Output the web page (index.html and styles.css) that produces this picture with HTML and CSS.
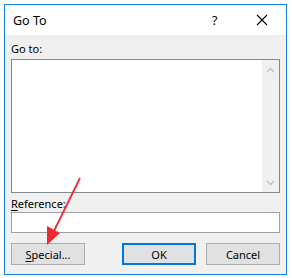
FILE: index.html
```html
<!DOCTYPE html>
<html lang="en">
<head>
    <meta charset="UTF-8">
    <title>Go To</title>
    <link rel="stylesheet" href="styles.css">
</head>
<body>

    <div class="window">
        <div class="titlebar">
            <span class="title">Go To</span>
            <span class="help">?</span>
            <svg class="close" width="12" height="12" viewBox="0 0 12 12">
                <path d="M1 1 L11 11 M11 1 L1 11" stroke="#000" stroke-width="1.1" fill="none"/>
            </svg>
        </div>
        <div class="content">
            <div class="label">Go to:</div>
            <div class="listbox">
                <div class="list-area"></div>
                <div class="scrollbar">
                    <svg width="9" height="6" viewBox="0 0 9 6"><path d="M1 5 L4.5 1.5 L8 5" stroke="#c2c2c2" stroke-width="1.4" fill="none"/></svg>
                    <svg width="9" height="6" viewBox="0 0 9 6"><path d="M1 1 L4.5 4.5 L8 1" stroke="#c2c2c2" stroke-width="1.4" fill="none"/></svg>
                </div>
            </div>
            <div class="label ref-label"><u>R</u>eference:</div>
            <div class="input"></div>
            <div class="buttons">
                <button class="btn"><u>S</u>pecial...</button>
                <button class="btn btn-default">OK</button>
                <button class="btn">Cancel</button>
            </div>
        </div>

        <!-- red pointer arrow drawn over the dialog -->
        <svg class="arrow" width="60" height="80" viewBox="0 0 60 80">
            <path d="M52 3 L25 58" stroke="#ee2a35" stroke-width="1.8" fill="none"/>
            <path d="M19 70 L19 51 L32 58 Z" fill="#ee2a35"/>
        </svg>
    </div>

</body>
</html>
```

FILE: styles.css
```css
body {
    margin: 0;
    background: #fff;
    font-family: "Noto Sans", "Open Sans", sans-serif;
    color: #000;
}
.window {
    position: relative;
    margin: 4px;
    width: 283px;
    height: 271px;
    box-sizing: border-box;
    border: 1px solid #1883d7;
    background: #f0f0f0;
    display: flex;
    flex-direction: column;
}
.titlebar {
    height: 30px;
    background: #fff;
    display: flex;
    align-items: center;
    padding-left: 8px;
}
.title {
    font-size: 12.5px;
    flex: 1;
}
.help {
    font-size: 12.5px;
    width: 12px;
    margin-right: 32px;
}
.close {
    margin-right: 18px;
}
.content {
    padding: 6px 6px 0 6px;
    display: flex;
    flex-direction: column;
}
.label {
    font-size: 11px;
    line-height: 15px;
    height: 15px;
}
.label u {
    text-underline-offset: 2px;
}
.listbox {
    margin-top: 3px;
    height: 134px;
    box-sizing: border-box;
    border: 1px solid #828790;
    background: #fff;
    display: flex;
}
.list-area {
    flex: 1;
}
.scrollbar {
    width: 17px;
    background: #f0f0f0;
    display: flex;
    flex-direction: column;
    justify-content: space-between;
    align-items: center;
    padding: 7px 0 6px 0;
}
.scrollbar svg {
    display: block;
}
.ref-label {
    margin-top: 3px;
}
.input {
    margin-top: 1px;
    height: 21px;
    box-sizing: border-box;
    border: 1px solid #a0a0a0;
    background: #fff;
}
.buttons {
    margin-top: 10px;
    display: flex;
    justify-content: space-between;
}
.btn {
    width: 74px;
    height: 22px;
    box-sizing: border-box;
    border: 1px solid #adadad;
    background: #e1e1e1;
    font-family: "Noto Sans", "Open Sans", sans-serif;
    font-size: 11px;
    color: #000;
    padding: 0;
}
.btn u {
    text-underline-offset: 2px;
}
.btn-default {
    border: 2px solid #0078d7;
    margin-left: 37px;
    margin-right: 10px;
}
.arrow {
    position: absolute;
    left: 23px;
    top: 170px;
}
```
